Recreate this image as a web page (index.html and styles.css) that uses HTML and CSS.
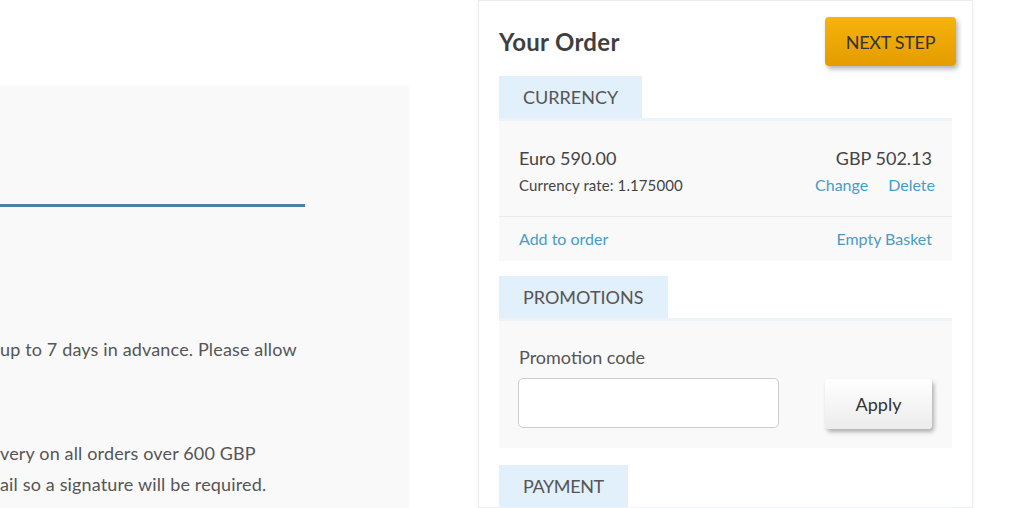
FILE: index.html
```html
<!DOCTYPE html>
<html lang="en">
<head>
  <meta charset="UTF-8">
  <meta name="viewport" content="width=device-width, initial-scale=1">
  <title>Checkout - Your Order</title>
  <link rel="stylesheet" href="styles.css">
</head>
<body>
  <div class="page">
    <!-- Delivery info (scrolled partly out of view) -->
    <section class="info">
      <div class="info-rule"></div>
      <p class="info-text first">up to 7 days in advance. Please allow</p>
      <p class="info-text">very on all orders over 600 GBP</p>
      <p class="info-text">ail so a signature will be required.</p>
    </section>

    <!-- Order summary -->
    <aside class="order">
      <div class="order-head">
        <h2>Your Order</h2>
        <button class="btn btn-next">NEXT STEP</button>
      </div>

      <div class="tab-bar"><span class="tab">CURRENCY</span></div>
      <div class="panel">
        <div class="line-item">
          <div>
            <div class="amount">Euro 590.00</div>
            <div class="rate">Currency rate: 1.175000</div>
          </div>
          <div class="right">
            <div class="amount">GBP 502.13</div>
            <div class="actions">
              <a href="#">Change</a>
              <a href="#">Delete</a>
            </div>
          </div>
        </div>
        <div class="basket-row">
          <a href="#">Add to order</a>
          <a href="#">Empty Basket</a>
        </div>
      </div>

      <div class="tab-bar"><span class="tab">PROMOTIONS</span></div>
      <div class="panel promo">
        <label for="promo-code">Promotion code</label>
        <div class="promo-row">
          <input type="text" id="promo-code">
          <button class="btn btn-apply">Apply</button>
        </div>
      </div>

      <div class="tab-bar"><span class="tab tab-narrow">PAYMENT</span></div>
    </aside>
  </div>
</body>
</html>
```

FILE: styles.css
```css
:root {
  --text: #555555;
  --heading: #3f3f3f;
  --link: #4a9bc6;
  --panel-bg: #f9f9f9;
  --tab-bg: #e2f0fb;
  --rule: #4b7fa3;
}
* { box-sizing: border-box; margin: 0; padding: 0; }
html, body { height: 100%; }
body {
  font-family: 'Lato', 'Open Sans', sans-serif;
  background: #ffffff;
  color: var(--text);
  overflow: hidden;
}
a { color: var(--link); text-decoration: none; }
.page {
  display: flex;
  height: 100%;
}

/* left column */
.info {
  width: 409px;
  margin-top: 86px;
  background: var(--panel-bg);
  flex: none;
}
.info-rule {
  width: 305px;
  height: 3px;
  margin-top: 118px;
  background: var(--rule);
}
.info-text {
  font-size: 18px;
  letter-spacing: 0.15px;
  line-height: 31px;
  white-space: nowrap;
}
.info-text.first { margin-top: 127px; margin-bottom: 73px; }

/* order card */
.order {
  width: 495px;
  margin-left: 69px;
  border: 1px solid #ececec;
  box-shadow: 0 0 4px rgba(0,0,0,0.04);
  padding: 16px 20px 0;
  flex: none;
}
.order-head {
  display: flex;
  justify-content: space-between;
  align-items: center;
  margin-right: -4px;
  margin-bottom: 10px;
}
.order-head h2 {
  font-size: 24px;
  font-weight: 700;
  letter-spacing: 0.3px;
  color: var(--heading);
}
.btn {
  font-family: inherit;
  border: none;
  border-radius: 4px;
  cursor: pointer;
  color: #333;
}
.btn-next {
  width: 131px;
  height: 49px;
  font-size: 18px;
  letter-spacing: -0.3px;
  background: linear-gradient(#f6b30c, #e49c00);
  box-shadow: 2px 3px 5px rgba(0,0,0,0.3);
}
.tab-bar {
  display: flex;
  border-bottom: 3px solid #edf3f7;
}
.tab {
  background: var(--tab-bg);
  padding: 0 24px;
  height: 42px;
  line-height: 42px;
  font-size: 18px;
  color: var(--text);
}
.tab-narrow { letter-spacing: -0.4px; }
.panel {
  background: var(--panel-bg);
  margin-bottom: 15px;
}

/* currency */
.line-item {
  display: flex;
  justify-content: space-between;
  padding: 25px 20px 20px;
  border-bottom: 1px solid #ebebeb;
}
.amount {
  font-size: 18px;
  line-height: 24px;
  color: #444;
}
.rate {
  font-size: 15px;
  letter-spacing: 0.1px;
  line-height: 22px;
  margin-top: 4px;
  color: #444;
}
.right { text-align: right; }
.actions {
  font-size: 16px;
  line-height: 22px;
  margin-top: 4px;
  margin-right: -3px;
  display: flex;
  justify-content: flex-end;
  gap: 20px;
}
.basket-row {
  display: flex;
  justify-content: space-between;
  padding: 0 20px;
  font-size: 16px;
  line-height: 44px;
}

/* promotions */
.promo {
  padding: 25px 20px 19px 19px;
  margin-bottom: 17px;
}
.promo label {
  display: block;
  font-size: 18px;
  line-height: 22px;
  margin-left: 1px;
  margin-bottom: 10px;
}
.promo-row {
  display: flex;
  justify-content: space-between;
  align-items: flex-start;
}
.promo-row input {
  width: 261px;
  height: 50px;
  border: 1px solid #cccccc;
  border-radius: 5px;
  background: #fff;
}
.btn-apply {
  width: 107px;
  height: 50px;
  margin-top: 1px;
  font-size: 18px;
  background: linear-gradient(#ffffff, #ececec);
  box-shadow: 2px 3px 4px rgba(0,0,0,0.3);
}
```
